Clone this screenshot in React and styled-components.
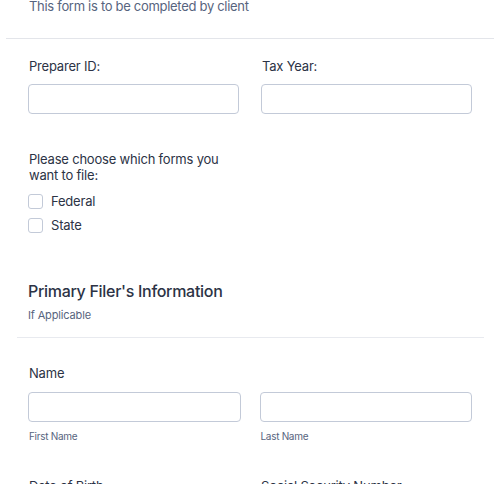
import React from 'react';
import styled, { createGlobalStyle } from 'styled-components';

const GlobalStyle = createGlobalStyle`
  html, body {
    margin: 0;
    padding: 0;
    background: #ffffff;
    overflow: hidden;
  }
  body {
    font-family: Inter, "Noto Sans", "Liberation Sans", sans-serif;
    color: #2c3345;
    -webkit-font-smoothing: antialiased;
  }
`;

const Page = styled.div`
  width: 500px;
  height: 484px;
  overflow: hidden;
`;

const Header = styled.div`
  margin: 0 6px;
  padding: 0 23px 24px;
  border-bottom: 1px solid #e3e5ea;
`;

const HeaderText = styled.p`
  margin: -2px 0 0;
  font-size: 13px;
  line-height: 16px;
  letter-spacing: -0.3px;
  color: #57647e;
`;

const Form = styled.div`
  padding: 0 28px 0 29px;
  display: flex;
  flex-direction: column;
`;

const Row = styled.div`
  display: grid;
  grid-template-columns: ${({ $single }) => ($single ? '212px' : '1fr 1fr')};
  column-gap: ${({ $gap }) => $gap || 20}px;
  margin-top: ${({ $top }) => $top}px;
  margin-left: -1px;
`;

const Field = styled.div`
  display: flex;
  flex-direction: column;
`;

const Label = styled.label`
  padding-left: 1px;
  font-size: 13px;
  line-height: 16px;
  font-weight: 400;
  letter-spacing: -0.2px;
  color: #2c3345;
  margin-bottom: ${({ $mb }) => $mb ?? 10}px;
`;

const Input = styled.input`
  box-sizing: border-box;
  height: 30px;
  width: 100%;
  margin: 0;
  border: 1px solid #c3cad8;
  border-radius: 4px;
  background: #ffffff;
  font: inherit;
  outline: none;
`;

const SubLabel = styled.span`
  margin-top: 8px;
  padding-left: 1px;
  font-size: 10px;
  line-height: 12px;
  letter-spacing: -0.3px;
  color: #57647e;
`;

const CheckList = styled.div`
  display: flex;
  flex-direction: column;
  gap: 8px;
  margin-top: 10px;
`;

const CheckRow = styled.label`
  display: flex;
  align-items: center;
  gap: 8px;
  font-size: 13px;
  line-height: 16px;
  letter-spacing: -0.2px;
  color: #2c3345;
`;

const CheckBox = styled.span`
  box-sizing: border-box;
  width: 15px;
  height: 15px;
  border: 1px solid #c3cad8;
  border-radius: 3px;
  background: #ffffff;
`;

const SectionHead = styled.div`
  margin: 48px -12px 0;
  padding: 0 11px 15px;
  border-bottom: 1px solid #e8eaef;
`;

const SectionTitle = styled.h2`
  margin: 0;
  font-size: 16px;
  line-height: 20px;
  font-weight: 500;
  letter-spacing: -0.3px;
  color: #2c3345;
`;

const SectionSub = styled.p`
  margin: 7px 0 0;
  font-size: 11px;
  line-height: 14px;
  letter-spacing: -0.15px;
  color: #57647e;
`;

export default function App() {
  return (
    <Page>
      <GlobalStyle />
      <Header>
        <HeaderText>This form is to be completed by client</HeaderText>
      </Header>
      <Form>
        <Row $top={19} $gap={22}>
          <Field>
            <Label>Preparer ID:</Label>
            <Input type="text" />
          </Field>
          <Field>
            <Label>Tax Year:</Label>
            <Input type="text" />
          </Field>
        </Row>

        <Row $top={37} $single>
          <Field>
            <Label $mb={0}>Please choose which forms you want to file:</Label>
            <CheckList>
              <CheckRow>
                <CheckBox />
                Federal
              </CheckRow>
              <CheckRow>
                <CheckBox />
                State
              </CheckRow>
            </CheckList>
          </Field>
        </Row>

        <SectionHead>
          <SectionTitle>Primary Filer's Information</SectionTitle>
          <SectionSub>If Applicable</SectionSub>
        </SectionHead>

        <Row $top={27} $single>
          <Label $mb={11}>Name</Label>
        </Row>
        <Row $top={0} $gap={19}>
          <Field>
            <Input type="text" />
            <SubLabel>First Name</SubLabel>
          </Field>
          <Field>
            <Input type="text" />
            <SubLabel>Last Name</SubLabel>
          </Field>
        </Row>

        <Row $top={36} $gap={20}>
          <Field>
            <Label>Date of Birth</Label>
          </Field>
          <Field>
            <Label>Social Security Number</Label>
          </Field>
        </Row>
      </Form>
    </Page>
  );
}
